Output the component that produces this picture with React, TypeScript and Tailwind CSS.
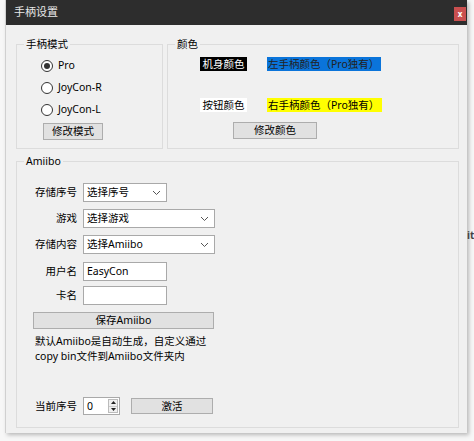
import React from 'react';

const font = { fontFamily: '"Noto Sans", "Noto Sans CJK SC", sans-serif' };

function Radio({ label, checked }: { label: string; checked?: boolean }) {
  return (
    <div className="flex h-[22px] items-center gap-[5px]">
      <span className="flex h-[12px] w-[12px] items-center justify-center rounded-full border border-[#333] bg-white">
        {checked && <span className="h-[6px] w-[6px] rounded-full bg-[#333]" />}
      </span>
      <span>{label}</span>
    </div>
  );
}

function Chevron() {
  return (
    <svg width="9" height="6" viewBox="0 0 9 6" className="shrink-0">
      <polyline points="1,1 4.5,4.5 8,1" fill="none" stroke="#555" strokeWidth="1" />
    </svg>
  );
}

function Select({ value, width }: { value: string; width: string }) {
  return (
    <div className={`flex h-[19px] items-center justify-between border border-[#a9a9a9] bg-white pl-[3px] pr-[5px] ${width}`}>
      <span className="leading-none">{value}</span>
      <Chevron />
    </div>
  );
}

function Button({ children, className }: { children: React.ReactNode; className: string }) {
  return (
    <div className={`flex items-center justify-center border border-[#adadad] bg-[#e1e1e1] leading-none ${className}`}>
      {children}
    </div>
  );
}

function Row({ label, children, className }: { label: string; children: React.ReactNode; className?: string }) {
  return (
    <div className={`flex items-center ${className ?? ''}`}>
      <span className="w-[42px] whitespace-nowrap text-right leading-none">{label}</span>
      <div className="ml-[6px]">{children}</div>
    </div>
  );
}

export default function App() {
  return (
    <div className="flex h-[441px] w-[474px] overflow-hidden bg-[#f7f7f7] text-[10.5px] text-black" style={font}>
      <div className="ml-[5px] flex h-[433px] w-[462px] shrink-0 flex-col border-l border-[#d0d0d0] bg-[#f0f0f0] shadow-[2px_2px_4px_rgba(0,0,0,0.25)]">
        {/* Title bar */}
        <div className="flex h-[25px] shrink-0 items-start justify-between bg-[#2d2d2d]">
          <span className="ml-[8px] mt-[6px] text-[11px] leading-none text-[#e8e8e8]">手柄设置</span>
          <div className="mr-[1px] mt-[7px] flex h-[14px] w-[12px] items-center justify-center bg-[#c94f4f] text-[8px] font-bold leading-none text-white">
            x
          </div>
        </div>

        <div className="flex flex-col pl-[10px] pt-[11px]">
          {/* Top row */}
          <div className="flex gap-[4px]">
            <fieldset className="m-0 h-[113px] w-[147px] border border-[#dcdcdc] p-0">
              <legend className="ml-[7px] px-[2px] leading-[16px]">手柄模式</legend>
              <div className="flex flex-col pl-[24px] pt-[3px]">
                <Radio label="Pro" checked />
                <Radio label="JoyCon-R" />
                <Radio label="JoyCon-L" />
                <Button className="ml-[2px] mt-[2px] h-[17px] w-[60px]">修改模式</Button>
              </div>
            </fieldset>

            <fieldset className="m-0 h-[113px] w-[292px] border border-[#dcdcdc] p-0">
              <legend className="ml-[7px] px-[2px] leading-[16px]">颜色</legend>
              <div className="flex flex-col pl-[32px] pt-[5px]">
                <div className="flex items-center gap-[20px]">
                  <span className="flex h-[14px] w-[47px] items-center justify-center bg-black leading-none text-white">机身颜色</span>
                  <span className="flex h-[14px] w-[114px] items-center bg-[#0a74da] pl-[1px] leading-none text-[#222]">左手柄颜色（Pro独有）</span>
                </div>
                <div className="mt-[27px] flex items-center gap-[20px]">
                  <span className="flex h-[14px] w-[47px] items-center justify-center bg-white leading-none">按钮颜色</span>
                  <span className="flex h-[14px] w-[115px] items-center bg-[#ffff00] pl-[1px] leading-none">右手柄颜色（Pro独有）</span>
                </div>
                <Button className="ml-[33px] mt-[10px] h-[17px] w-[84px]">修改颜色</Button>
              </div>
            </fieldset>
          </div>

          {/* Amiibo */}
          <fieldset className="m-0 mt-[4px] h-[275px] w-[443px] border border-[#dcdcdc] p-0">
            <legend className="ml-[7px] px-[2px] leading-[16px]">Amiibo</legend>
            <div className="flex flex-col pl-[18px] pt-[14px]">
              <Row label="存储序号">
                <Select value="选择序号" width="w-[84px]" />
              </Row>
              <Row label="游戏" className="mt-[7px]">
                <Select value="选择游戏" width="w-[132px]" />
              </Row>
              <Row label="存储内容" className="mt-[7px]">
                <Select value="选择Amiibo" width="w-[132px]" />
              </Row>
              <Row label="用户名" className="mt-[8px]">
                <div className="flex h-[19px] w-[84px] items-center border border-[#a9a9a9] bg-white pl-[3px] leading-none">EasyCon</div>
              </Row>
              <Row label="卡名" className="mt-[5px]">
                <div className="h-[19px] w-[84px] border border-[#a9a9a9] bg-white" />
              </Row>
              <Button className="-ml-[2px] mt-[7px] h-[17px] w-[181px]">保存Amiibo</Button>
              <p className="mt-[5px] leading-[15px]">
                默认Amiibo是自动生成，自定义通过
                <br />
                copy bin文件到Amiibo文件夹内
              </p>
              <div className="mt-[33px] flex items-center">
                <span className="w-[42px] whitespace-nowrap text-right leading-none">当前序号</span>
                <div className="ml-[6px] flex h-[18px] w-[37px] items-center justify-between border border-[#a9a9a9] bg-white pl-[3px] leading-none">
                  <span>0</span>
                  <div className="mr-[1px] flex h-[14px] w-[10px] flex-col border border-[#bbb] bg-[#f0f0f0]">
                    <div className="flex flex-1 items-center justify-center border-b border-[#ccc]">
                      <svg width="5" height="3" viewBox="0 0 5 3"><polygon points="0,3 2.5,0 5,3" fill="#222" /></svg>
                    </div>
                    <div className="flex flex-1 items-center justify-center">
                      <svg width="5" height="3" viewBox="0 0 5 3"><polygon points="0,0 2.5,3 5,0" fill="#222" /></svg>
                    </div>
                  </div>
                </div>
                <Button className="ml-[11px] h-[16px] w-[82px]">激活</Button>
              </div>
            </div>
          </fieldset>
        </div>
      </div>
      <div className="flex w-[7px] shrink-0 flex-col">
        <span className="mt-[230px] text-[10px] font-bold leading-none text-[#444]">it</span>
      </div>
    </div>
  );
}
